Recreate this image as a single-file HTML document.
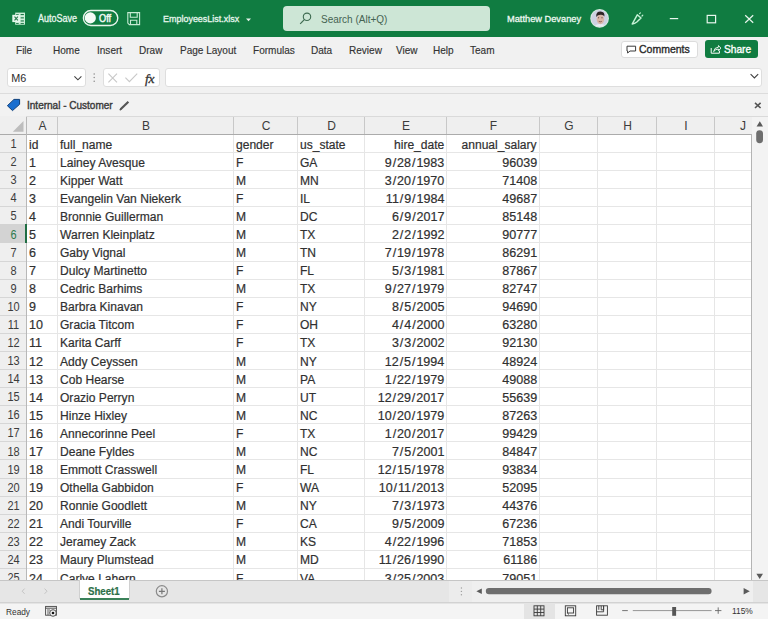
<!DOCTYPE html><html><head><meta charset="utf-8"><style>
*{box-sizing:border-box;margin:0;padding:0}
body{width:768px;height:619px;overflow:hidden;position:relative;background:#f3f3f3;font-family:"Liberation Sans",sans-serif;color:#262626}
.a{position:absolute}
.t{position:absolute;white-space:nowrap;line-height:1}
.cell{position:absolute;white-space:nowrap;font-size:12.3px;line-height:18px;color:#303030;-webkit-text-stroke:0.2px #303030;transform-origin:0 50%}
.cr{transform-origin:100% 50%}
.hl{position:absolute;height:1px}
.vl{position:absolute;width:1px}
svg{position:absolute;overflow:visible}
</style></head><body>

<div class="a" style="left:0;top:0;width:768px;height:37px;background:#107c41"></div>
<svg style="left:0;top:0" width="40" height="37">
<rect x="15.2" y="12.6" width="9.8" height="12.1" fill="#cdeed8"/>
<g fill="#1d7746"><rect x="20.6" y="14" width="3.3" height="1.1"/><rect x="20.6" y="17.3" width="3.3" height="1.1"/><rect x="20.6" y="20.4" width="3.3" height="1.1"/><rect x="20.6" y="23" width="3.3" height="0.9"/><rect x="16.1" y="14" width="2.6" height="1.1"/><rect x="16.1" y="23" width="2.6" height="0.9"/></g>
<rect x="12.3" y="14.8" width="7.8" height="7.3" fill="#e6f7ec"/>
<path d="M14.5 16.6 L17.9 20.4 M17.9 16.6 L14.5 20.4" stroke="#2a7a4d" stroke-width="1.1"/>
</svg>
<div class="t" style="left:37.6px;top:13.7px;font-size:10px;color:#e8f7ee;-webkit-text-stroke:0.3px #e8f7ee;transform:scaleX(0.9);transform-origin:0 0">AutoSave</div>
<svg style="left:0;top:0" width="160" height="37">
<rect x="83.4" y="10.5" width="34.4" height="15" rx="7.5" fill="none" stroke="#e8f5ec" stroke-width="1.4"/>
<circle cx="90.3" cy="17.9" r="5.6" fill="#f4fbf6"/>
</svg>
<div class="t" style="left:99.4px;top:14px;font-size:10px;color:#f2faf5;-webkit-text-stroke:0.45px #f2faf5;transform:scaleX(0.92);transform-origin:0 0">Off</div>
<svg style="left:0;top:0" width="160" height="37">
<g fill="none" stroke="#c6ead3" stroke-width="1.1">
<path d="M127.8 12.6 H139.6 V24.6 H129.3 L127.8 23.1 Z"/>
<path d="M130.3 12.6 V17.2 H137.2 V12.6"/>
<path d="M130.5 24.6 V20.3 H136.8 V24.6"/>
</g></svg>
<div class="t" style="left:163.2px;top:14.4px;font-size:9.7px;color:#e8f7ee;-webkit-text-stroke:0.3px #e8f7ee;transform:scaleX(0.925);transform-origin:0 0">EmployeesList.xlsx</div>
<svg style="left:0;top:0" width="260" height="37"><path d="M246 18.6 H251 L248.5 21.2 Z" fill="#e6f3eb"/></svg>
<div class="a" style="left:283px;top:6px;width:207px;height:25px;border-radius:4px;background:#cde6d6"></div>
<svg style="left:0;top:0" width="330" height="37">
<circle cx="307" cy="16.8" r="3.7" fill="none" stroke="#3e6b51" stroke-width="1.1"/>
<path d="M304.3 19.6 L300.2 23.8" stroke="#3e6b51" stroke-width="1.2"/>
</svg>
<div class="t" style="left:321px;top:14.6px;font-size:10px;color:#466352">Search (Alt+Q)</div>
<div class="t" style="left:507.2px;top:14.4px;font-size:9.7px;color:#eef8f1;-webkit-text-stroke:0.3px #eef8f1;transform:scaleX(0.955);transform-origin:0 0">Matthew Devaney</div>
<svg style="left:0;top:0" width="768" height="37">
<defs><clipPath id="av"><circle cx="599.6" cy="18.4" r="8.4"/></clipPath></defs>
<circle cx="599.6" cy="18.4" r="9.3" fill="#d9eee2"/>
<g clip-path="url(#av)">
<rect x="590" y="9" width="20" height="20" fill="#cdd1e2"/>
<path d="M593.5 29 Q594 24.2 600.2 24 Q606.4 24.2 607 29 Z" fill="#e9ebf2"/>
<ellipse cx="600.4" cy="19.2" rx="3.7" ry="5" fill="#d9b5a6"/>
<path d="M596.2 17 Q595.8 11.6 600.6 11.6 Q605 11.8 604.4 16.6 Q603.4 14.6 600.6 14.8 Q597.6 14.9 596.2 17 Z" fill="#2f2424"/>
<circle cx="598.6" cy="17.8" r="0.55" fill="#3a2a2a"/><circle cx="602" cy="17.8" r="0.55" fill="#3a2a2a"/>
<path d="M598.8 21.4 Q600.4 22.2 601.8 21.4" stroke="#7a4f43" stroke-width="0.8" fill="none"/>
</g></svg>
<svg style="left:0;top:0" width="768" height="37">
<g fill="none" stroke="#c6f2d6" stroke-width="1.5" stroke-linejoin="round" stroke-linecap="round">
<path d="M632.2 24 L637.3 14.8 L641 18 L636.8 22 Q634.6 23.6 632.2 24 Z"/>
<path d="M639.6 13.6 L640.4 12.8 M642 16 L642.8 15.2" stroke-width="1.2"/>
</g>
<path d="M669.8 18.6 H678.2" stroke="#e8f6ed" stroke-width="1.2"/>
<rect x="707.2" y="15.4" width="8.4" height="7.4" fill="none" stroke="#e8f6ed" stroke-width="1.2"/>
<path d="M745.2 15.2 L753.2 22.8 M753.2 15.2 L745.2 22.8" stroke="#e8f6ed" stroke-width="1.2"/>
</svg>
<div class="a" style="left:0;top:37px;width:768px;height:56px;background:#f1f1f1"></div>
<div class="t" style="left:16.299999999999997px;top:45px;font-size:10.5px;color:#333;-webkit-text-stroke:0.15px #333;transform:scaleX(0.955);transform-origin:0 0">File</div>
<div class="t" style="left:53.199999999999996px;top:45px;font-size:10.5px;color:#333;-webkit-text-stroke:0.15px #333;transform:scaleX(0.955);transform-origin:0 0">Home</div>
<div class="t" style="left:97.10000000000001px;top:45px;font-size:10.5px;color:#333;-webkit-text-stroke:0.15px #333;transform:scaleX(0.955);transform-origin:0 0">Insert</div>
<div class="t" style="left:139.3px;top:45px;font-size:10.5px;color:#333;-webkit-text-stroke:0.15px #333;transform:scaleX(0.955);transform-origin:0 0">Draw</div>
<div class="t" style="left:179.9px;top:45px;font-size:10.5px;color:#333;-webkit-text-stroke:0.15px #333;transform:scaleX(0.955);transform-origin:0 0">Page Layout</div>
<div class="t" style="left:253.20000000000002px;top:45px;font-size:10.5px;color:#333;-webkit-text-stroke:0.15px #333;transform:scaleX(0.955);transform-origin:0 0">Formulas</div>
<div class="t" style="left:311.29999999999995px;top:45px;font-size:10.5px;color:#333;-webkit-text-stroke:0.15px #333;transform:scaleX(0.955);transform-origin:0 0">Data</div>
<div class="t" style="left:349.0px;top:45px;font-size:10.5px;color:#333;-webkit-text-stroke:0.15px #333;transform:scaleX(0.955);transform-origin:0 0">Review</div>
<div class="t" style="left:396.09999999999997px;top:45px;font-size:10.5px;color:#333;-webkit-text-stroke:0.15px #333;transform:scaleX(0.955);transform-origin:0 0">View</div>
<div class="t" style="left:432.9px;top:45px;font-size:10.5px;color:#333;-webkit-text-stroke:0.15px #333;transform:scaleX(0.955);transform-origin:0 0">Help</div>
<div class="t" style="left:469.79999999999995px;top:45px;font-size:10.5px;color:#333;-webkit-text-stroke:0.15px #333;transform:scaleX(0.955);transform-origin:0 0">Team</div>
<div class="a" style="left:620.5px;top:40.5px;width:77.5px;height:17px;border-radius:3px;background:#fff;border:1px solid #dcdcdc"></div>
<svg style="left:0;top:0" width="768" height="70">
<path d="M627 46.2 H635.6 V51 H630 L627.6 53 V51 H627 Z" fill="none" stroke="#3a3a3a" stroke-width="1"/>
</svg>
<div class="t" style="left:639px;top:44.2px;font-size:10.5px;color:#2b2b2b;-webkit-text-stroke:0.35px #2b2b2b;transform:scaleX(1.0);transform-origin:0 0">Comments</div>
<div class="a" style="left:705px;top:40px;width:53px;height:18.2px;border-radius:3px;background:#107c41"></div>
<svg style="left:0;top:0" width="768" height="70">
<path d="M711.2 48 V53.2 H719.4 V50.6" fill="none" stroke="#fff" stroke-width="1"/>
<path d="M713.6 51.6 Q714.2 47.4 718.4 47.2 V45.6 L721 48.2 L718.4 50.6 V49 Q715.6 49 713.6 51.6 Z" fill="none" stroke="#fff" stroke-width="0.9" stroke-linejoin="round"/>
</svg>
<div class="t" style="left:723.5px;top:44.2px;font-size:10.5px;color:#fff;-webkit-text-stroke:0.35px #fff;transform:scaleX(0.97);transform-origin:0 0">Share</div>
<div class="a" style="left:7px;top:68px;width:79px;height:19px;border-radius:3px;background:#fff;border:1px solid #dedede"></div>
<div class="t" style="left:11.2px;top:73.3px;font-size:10.8px;color:#2b2b2b">M6</div>
<svg style="left:0;top:0" width="768" height="100">
<path d="M74.4 76.3 L77.9 79.8 L81.4 76.3" fill="none" stroke="#404040" stroke-width="1.1"/>
<circle cx="94.2" cy="74" r="0.75" fill="#8a8a8a"/><circle cx="94.2" cy="77.6" r="0.75" fill="#8a8a8a"/><circle cx="94.2" cy="81.2" r="0.75" fill="#8a8a8a"/>
</svg>
<div class="a" style="left:103px;top:68px;width:57px;height:19px;border-radius:3px;background:#fff;border:1px solid #dedede"></div>
<svg style="left:0;top:0" width="768" height="100">
<path d="M108.4 73.6 L117 82.4 M117 73.6 L108.4 82.4" stroke="#c8c8c8" stroke-width="1.1"/>
<path d="M125.4 77.6 L129.4 81.6 L137.2 73.6" fill="none" stroke="#c8c8c8" stroke-width="1.1"/>
</svg>
<div class="t" style="left:145px;top:71.5px;font-size:13.5px;font-family:'Liberation Serif',serif;font-style:italic;color:#333;-webkit-text-stroke:0.3px #333;letter-spacing:-0.3px">fx</div>
<div class="a" style="left:164.5px;top:68px;width:597px;height:19px;border-radius:3px;background:#fff;border:1px solid #dedede"></div>
<svg style="left:0;top:0" width="768" height="100">
<path d="M750.6 74.2 L754.4 78 L758.2 74.2" fill="none" stroke="#404040" stroke-width="1.1"/>
</svg>
<div class="a" style="left:0;top:93px;width:768px;height:1px;background:#dcdcdc"></div>
<div class="a" style="left:0;top:94px;width:768px;height:22px;background:#f2f2f2"></div>
<svg style="left:0;top:0" width="768" height="120">
<path d="M7.4 105.7 L14 99.4 H19.6 V104.3 L12.5 110.6 Z" fill="#1a6fd0" stroke="#0d3f7a" stroke-width="1" stroke-linejoin="round"/>
<path d="M120.6 109.2 L128.4 101.8" stroke="#555" stroke-width="2.2"/>
<path d="M119.8 110.2 L121.3 108.6" stroke="#555" stroke-width="1.4"/>
<path d="M755 102.8 L760.6 108 M760.6 102.8 L755 108" stroke="#555" stroke-width="1.6"/>
</svg>
<div class="t" style="left:26.8px;top:100.1px;font-size:10.6px;color:#3b3b3b;-webkit-text-stroke:0.4px #3b3b3b;transform:scaleX(0.945);transform-origin:0 0">Internal - Customer</div>
<div class="a" style="left:0;top:116px;width:768px;height:464px;background:#fff"></div>
<div class="a" style="left:0;top:116px;width:768px;height:18px;background:#efefef"></div>
<div class="hl" style="left:0;top:116px;width:768px;background:#dadada"></div>
<div class="a" style="left:0;top:116px;width:26px;height:464px;background:#efefef"></div>
<div class="a" style="left:752px;top:117px;width:16px;height:463px;background:#f3f3f3"></div>
<div class="hl" style="left:27px;top:152px;width:724px;background:#e6e6e6"></div>
<div class="hl" style="left:0;top:152px;width:26px;background:#d6d6d6"></div>
<div class="hl" style="left:27px;top:170px;width:724px;background:#e6e6e6"></div>
<div class="hl" style="left:0;top:170px;width:26px;background:#d6d6d6"></div>
<div class="hl" style="left:27px;top:188px;width:724px;background:#e6e6e6"></div>
<div class="hl" style="left:0;top:188px;width:26px;background:#d6d6d6"></div>
<div class="hl" style="left:27px;top:206px;width:724px;background:#e6e6e6"></div>
<div class="hl" style="left:0;top:206px;width:26px;background:#d6d6d6"></div>
<div class="hl" style="left:27px;top:224px;width:724px;background:#e6e6e6"></div>
<div class="hl" style="left:0;top:224px;width:26px;background:#d6d6d6"></div>
<div class="hl" style="left:27px;top:242px;width:724px;background:#e6e6e6"></div>
<div class="hl" style="left:0;top:242px;width:26px;background:#d6d6d6"></div>
<div class="hl" style="left:27px;top:261px;width:724px;background:#e6e6e6"></div>
<div class="hl" style="left:0;top:261px;width:26px;background:#d6d6d6"></div>
<div class="hl" style="left:27px;top:279px;width:724px;background:#e6e6e6"></div>
<div class="hl" style="left:0;top:279px;width:26px;background:#d6d6d6"></div>
<div class="hl" style="left:27px;top:297px;width:724px;background:#e6e6e6"></div>
<div class="hl" style="left:0;top:297px;width:26px;background:#d6d6d6"></div>
<div class="hl" style="left:27px;top:315px;width:724px;background:#e6e6e6"></div>
<div class="hl" style="left:0;top:315px;width:26px;background:#d6d6d6"></div>
<div class="hl" style="left:27px;top:333px;width:724px;background:#e6e6e6"></div>
<div class="hl" style="left:0;top:333px;width:26px;background:#d6d6d6"></div>
<div class="hl" style="left:27px;top:351px;width:724px;background:#e6e6e6"></div>
<div class="hl" style="left:0;top:351px;width:26px;background:#d6d6d6"></div>
<div class="hl" style="left:27px;top:369px;width:724px;background:#e6e6e6"></div>
<div class="hl" style="left:0;top:369px;width:26px;background:#d6d6d6"></div>
<div class="hl" style="left:27px;top:387px;width:724px;background:#e6e6e6"></div>
<div class="hl" style="left:0;top:387px;width:26px;background:#d6d6d6"></div>
<div class="hl" style="left:27px;top:405px;width:724px;background:#e6e6e6"></div>
<div class="hl" style="left:0;top:405px;width:26px;background:#d6d6d6"></div>
<div class="hl" style="left:27px;top:423px;width:724px;background:#e6e6e6"></div>
<div class="hl" style="left:0;top:423px;width:26px;background:#d6d6d6"></div>
<div class="hl" style="left:27px;top:441px;width:724px;background:#e6e6e6"></div>
<div class="hl" style="left:0;top:441px;width:26px;background:#d6d6d6"></div>
<div class="hl" style="left:27px;top:459px;width:724px;background:#e6e6e6"></div>
<div class="hl" style="left:0;top:459px;width:26px;background:#d6d6d6"></div>
<div class="hl" style="left:27px;top:478px;width:724px;background:#e6e6e6"></div>
<div class="hl" style="left:0;top:478px;width:26px;background:#d6d6d6"></div>
<div class="hl" style="left:27px;top:496px;width:724px;background:#e6e6e6"></div>
<div class="hl" style="left:0;top:496px;width:26px;background:#d6d6d6"></div>
<div class="hl" style="left:27px;top:514px;width:724px;background:#e6e6e6"></div>
<div class="hl" style="left:0;top:514px;width:26px;background:#d6d6d6"></div>
<div class="hl" style="left:27px;top:532px;width:724px;background:#e6e6e6"></div>
<div class="hl" style="left:0;top:532px;width:26px;background:#d6d6d6"></div>
<div class="hl" style="left:27px;top:550px;width:724px;background:#e6e6e6"></div>
<div class="hl" style="left:0;top:550px;width:26px;background:#d6d6d6"></div>
<div class="hl" style="left:27px;top:568px;width:724px;background:#e6e6e6"></div>
<div class="hl" style="left:0;top:568px;width:26px;background:#d6d6d6"></div>
<div class="vl" style="left:57px;top:134px;height:446px;background:#e6e6e6"></div>
<div class="vl" style="left:57px;top:117px;height:17px;background:#c8c8c8"></div>
<div class="vl" style="left:233px;top:134px;height:446px;background:#e6e6e6"></div>
<div class="vl" style="left:233px;top:117px;height:17px;background:#c8c8c8"></div>
<div class="vl" style="left:297px;top:134px;height:446px;background:#e6e6e6"></div>
<div class="vl" style="left:297px;top:117px;height:17px;background:#c8c8c8"></div>
<div class="vl" style="left:364px;top:134px;height:446px;background:#e6e6e6"></div>
<div class="vl" style="left:364px;top:117px;height:17px;background:#c8c8c8"></div>
<div class="vl" style="left:446px;top:134px;height:446px;background:#e6e6e6"></div>
<div class="vl" style="left:446px;top:117px;height:17px;background:#c8c8c8"></div>
<div class="vl" style="left:539px;top:134px;height:446px;background:#e6e6e6"></div>
<div class="vl" style="left:539px;top:117px;height:17px;background:#c8c8c8"></div>
<div class="vl" style="left:597px;top:134px;height:446px;background:#e6e6e6"></div>
<div class="vl" style="left:597px;top:117px;height:17px;background:#c8c8c8"></div>
<div class="vl" style="left:656px;top:134px;height:446px;background:#e6e6e6"></div>
<div class="vl" style="left:656px;top:117px;height:17px;background:#c8c8c8"></div>
<div class="vl" style="left:714px;top:134px;height:446px;background:#e6e6e6"></div>
<div class="vl" style="left:714px;top:117px;height:17px;background:#c8c8c8"></div>
<div class="hl" style="left:0;top:134px;width:752px;background:#ababab"></div>
<div class="vl" style="left:26px;top:117px;height:463px;background:#b8b8b8"></div>
<div class="vl" style="left:751px;top:134px;height:446px;background:#b4b4b4"></div>
<svg style="left:0;top:0" width="40" height="140"><polygon points="23.5,121 23.5,131.8 12.8,131.8" fill="#bdbdbd"/></svg>
<div class="a" style="left:0;top:224px;width:25px;height:19px;background:#d3d3d3"></div>
<div class="a" style="left:25px;top:224px;width:2px;height:19px;background:#1f6e43"></div>
<div class="t" style="left:22.5px;width:40px;text-align:center;top:119.7px;font-size:12px;color:#3c3c3c">A</div>
<div class="t" style="left:126.0px;width:40px;text-align:center;top:119.7px;font-size:12px;color:#3c3c3c">B</div>
<div class="t" style="left:246.0px;width:40px;text-align:center;top:119.7px;font-size:12px;color:#3c3c3c">C</div>
<div class="t" style="left:311.5px;width:40px;text-align:center;top:119.7px;font-size:12px;color:#3c3c3c">D</div>
<div class="t" style="left:386.0px;width:40px;text-align:center;top:119.7px;font-size:12px;color:#3c3c3c">E</div>
<div class="t" style="left:473.5px;width:40px;text-align:center;top:119.7px;font-size:12px;color:#3c3c3c">F</div>
<div class="t" style="left:549.0px;width:40px;text-align:center;top:119.7px;font-size:12px;color:#3c3c3c">G</div>
<div class="t" style="left:607.5px;width:40px;text-align:center;top:119.7px;font-size:12px;color:#3c3c3c">H</div>
<div class="t" style="left:666.0px;width:40px;text-align:center;top:119.7px;font-size:12px;color:#3c3c3c">I</div>
<div class="t" style="left:723px;width:40px;text-align:center;top:119.7px;font-size:12px;color:#3c3c3c">J</div>
<div class="t" style="left:0;width:27px;text-align:center;top:138.10px;font-size:12.5px;color:#3c3c3c;transform:scaleX(0.88)">1</div>
<div class="t" style="left:0;width:27px;text-align:center;top:156.18px;font-size:12.5px;color:#3c3c3c;transform:scaleX(0.88)">2</div>
<div class="t" style="left:0;width:27px;text-align:center;top:174.27px;font-size:12.5px;color:#3c3c3c;transform:scaleX(0.88)">3</div>
<div class="t" style="left:0;width:27px;text-align:center;top:192.35px;font-size:12.5px;color:#3c3c3c;transform:scaleX(0.88)">4</div>
<div class="t" style="left:0;width:27px;text-align:center;top:210.43px;font-size:12.5px;color:#3c3c3c;transform:scaleX(0.88)">5</div>
<div class="t" style="left:0;width:27px;text-align:center;top:228.51px;font-size:12.5px;color:#2d7a4e;transform:scaleX(0.88)">6</div>
<div class="t" style="left:0;width:27px;text-align:center;top:246.60px;font-size:12.5px;color:#3c3c3c;transform:scaleX(0.88)">7</div>
<div class="t" style="left:0;width:27px;text-align:center;top:264.68px;font-size:12.5px;color:#3c3c3c;transform:scaleX(0.88)">8</div>
<div class="t" style="left:0;width:27px;text-align:center;top:282.76px;font-size:12.5px;color:#3c3c3c;transform:scaleX(0.88)">9</div>
<div class="t" style="left:0;width:27px;text-align:center;top:300.85px;font-size:12.5px;color:#3c3c3c;transform:scaleX(0.88)">10</div>
<div class="t" style="left:0;width:27px;text-align:center;top:318.93px;font-size:12.5px;color:#3c3c3c;transform:scaleX(0.88)">11</div>
<div class="t" style="left:0;width:27px;text-align:center;top:337.01px;font-size:12.5px;color:#3c3c3c;transform:scaleX(0.88)">12</div>
<div class="t" style="left:0;width:27px;text-align:center;top:355.10px;font-size:12.5px;color:#3c3c3c;transform:scaleX(0.88)">13</div>
<div class="t" style="left:0;width:27px;text-align:center;top:373.18px;font-size:12.5px;color:#3c3c3c;transform:scaleX(0.88)">14</div>
<div class="t" style="left:0;width:27px;text-align:center;top:391.26px;font-size:12.5px;color:#3c3c3c;transform:scaleX(0.88)">15</div>
<div class="t" style="left:0;width:27px;text-align:center;top:409.35px;font-size:12.5px;color:#3c3c3c;transform:scaleX(0.88)">16</div>
<div class="t" style="left:0;width:27px;text-align:center;top:427.43px;font-size:12.5px;color:#3c3c3c;transform:scaleX(0.88)">17</div>
<div class="t" style="left:0;width:27px;text-align:center;top:445.51px;font-size:12.5px;color:#3c3c3c;transform:scaleX(0.88)">18</div>
<div class="t" style="left:0;width:27px;text-align:center;top:463.59px;font-size:12.5px;color:#3c3c3c;transform:scaleX(0.88)">19</div>
<div class="t" style="left:0;width:27px;text-align:center;top:481.68px;font-size:12.5px;color:#3c3c3c;transform:scaleX(0.88)">20</div>
<div class="t" style="left:0;width:27px;text-align:center;top:499.76px;font-size:12.5px;color:#3c3c3c;transform:scaleX(0.88)">21</div>
<div class="t" style="left:0;width:27px;text-align:center;top:517.84px;font-size:12.5px;color:#3c3c3c;transform:scaleX(0.88)">22</div>
<div class="t" style="left:0;width:27px;text-align:center;top:535.93px;font-size:12.5px;color:#3c3c3c;transform:scaleX(0.88)">23</div>
<div class="t" style="left:0;width:27px;text-align:center;top:554.01px;font-size:12.5px;color:#3c3c3c;transform:scaleX(0.88)">24</div>
<div class="t" style="left:0;width:27px;text-align:center;top:572.09px;font-size:12.5px;color:#3c3c3c;transform:scaleX(0.88)">25</div>
<div class="cell" style="left:29.3px;top:135.54px;transform:scaleX(0.98)">id</div>
<div class="cell" style="left:60.3px;top:135.54px;transform:scaleX(0.98)">full_name</div>
<div class="cell" style="left:236.3px;top:135.54px;transform:scaleX(0.98)">gender</div>
<div class="cell" style="left:300.3px;top:135.54px;transform:scaleX(0.98)">us_state</div>
<div class="cell cr" style="right:324px;top:135.54px;transform:scaleX(0.98)">hire_date</div>
<div class="cell cr" style="right:231px;top:135.54px;transform:scaleX(0.98)">annual_salary</div>
<div class="cell" style="left:29.3px;top:153.62px;transform:scaleX(1.02)">1</div>
<div class="cell" style="left:60.3px;top:153.62px;transform:scaleX(0.98)">Lainey Avesque</div>
<div class="cell" style="left:236.3px;top:153.62px;transform:scaleX(0.98)">F</div>
<div class="cell" style="left:300.3px;top:153.62px;transform:scaleX(0.98)">GA</div>
<div class="cell cr" style="right:324px;top:153.62px;transform:scaleX(1.02)">9<span style="margin:0 0.9px">/</span>28<span style="margin:0 0.9px">/</span>1983</div>
<div class="cell cr" style="right:231px;top:153.62px;transform:scaleX(1.02)">96039</div>
<div class="cell" style="left:29.3px;top:171.70px;transform:scaleX(1.02)">2</div>
<div class="cell" style="left:60.3px;top:171.70px;transform:scaleX(0.98)">Kipper Watt</div>
<div class="cell" style="left:236.3px;top:171.70px;transform:scaleX(0.98)">M</div>
<div class="cell" style="left:300.3px;top:171.70px;transform:scaleX(0.98)">MN</div>
<div class="cell cr" style="right:324px;top:171.70px;transform:scaleX(1.02)">3<span style="margin:0 0.9px">/</span>20<span style="margin:0 0.9px">/</span>1970</div>
<div class="cell cr" style="right:231px;top:171.70px;transform:scaleX(1.02)">71408</div>
<div class="cell" style="left:29.3px;top:189.79px;transform:scaleX(1.02)">3</div>
<div class="cell" style="left:60.3px;top:189.79px;transform:scaleX(0.98)">Evangelin Van Niekerk</div>
<div class="cell" style="left:236.3px;top:189.79px;transform:scaleX(0.98)">F</div>
<div class="cell" style="left:300.3px;top:189.79px;transform:scaleX(0.98)">IL</div>
<div class="cell cr" style="right:324px;top:189.79px;transform:scaleX(1.02)">11<span style="margin:0 0.9px">/</span>9<span style="margin:0 0.9px">/</span>1984</div>
<div class="cell cr" style="right:231px;top:189.79px;transform:scaleX(1.02)">49687</div>
<div class="cell" style="left:29.3px;top:207.87px;transform:scaleX(1.02)">4</div>
<div class="cell" style="left:60.3px;top:207.87px;transform:scaleX(0.98)">Bronnie Guillerman</div>
<div class="cell" style="left:236.3px;top:207.87px;transform:scaleX(0.98)">M</div>
<div class="cell" style="left:300.3px;top:207.87px;transform:scaleX(0.98)">DC</div>
<div class="cell cr" style="right:324px;top:207.87px;transform:scaleX(1.02)">6<span style="margin:0 0.9px">/</span>9<span style="margin:0 0.9px">/</span>2017</div>
<div class="cell cr" style="right:231px;top:207.87px;transform:scaleX(1.02)">85148</div>
<div class="cell" style="left:29.3px;top:225.95px;transform:scaleX(1.02)">5</div>
<div class="cell" style="left:60.3px;top:225.95px;transform:scaleX(0.98)">Warren Kleinplatz</div>
<div class="cell" style="left:236.3px;top:225.95px;transform:scaleX(0.98)">M</div>
<div class="cell" style="left:300.3px;top:225.95px;transform:scaleX(0.98)">TX</div>
<div class="cell cr" style="right:324px;top:225.95px;transform:scaleX(1.02)">2<span style="margin:0 0.9px">/</span>2<span style="margin:0 0.9px">/</span>1992</div>
<div class="cell cr" style="right:231px;top:225.95px;transform:scaleX(1.02)">90777</div>
<div class="cell" style="left:29.3px;top:244.04px;transform:scaleX(1.02)">6</div>
<div class="cell" style="left:60.3px;top:244.04px;transform:scaleX(0.98)">Gaby Vignal</div>
<div class="cell" style="left:236.3px;top:244.04px;transform:scaleX(0.98)">M</div>
<div class="cell" style="left:300.3px;top:244.04px;transform:scaleX(0.98)">TN</div>
<div class="cell cr" style="right:324px;top:244.04px;transform:scaleX(1.02)">7<span style="margin:0 0.9px">/</span>19<span style="margin:0 0.9px">/</span>1978</div>
<div class="cell cr" style="right:231px;top:244.04px;transform:scaleX(1.02)">86291</div>
<div class="cell" style="left:29.3px;top:262.12px;transform:scaleX(1.02)">7</div>
<div class="cell" style="left:60.3px;top:262.12px;transform:scaleX(0.98)">Dulcy Martinetto</div>
<div class="cell" style="left:236.3px;top:262.12px;transform:scaleX(0.98)">F</div>
<div class="cell" style="left:300.3px;top:262.12px;transform:scaleX(0.98)">FL</div>
<div class="cell cr" style="right:324px;top:262.12px;transform:scaleX(1.02)">5<span style="margin:0 0.9px">/</span>3<span style="margin:0 0.9px">/</span>1981</div>
<div class="cell cr" style="right:231px;top:262.12px;transform:scaleX(1.02)">87867</div>
<div class="cell" style="left:29.3px;top:280.20px;transform:scaleX(1.02)">8</div>
<div class="cell" style="left:60.3px;top:280.20px;transform:scaleX(0.98)">Cedric Barhims</div>
<div class="cell" style="left:236.3px;top:280.20px;transform:scaleX(0.98)">M</div>
<div class="cell" style="left:300.3px;top:280.20px;transform:scaleX(0.98)">TX</div>
<div class="cell cr" style="right:324px;top:280.20px;transform:scaleX(1.02)">9<span style="margin:0 0.9px">/</span>27<span style="margin:0 0.9px">/</span>1979</div>
<div class="cell cr" style="right:231px;top:280.20px;transform:scaleX(1.02)">82747</div>
<div class="cell" style="left:29.3px;top:298.29px;transform:scaleX(1.02)">9</div>
<div class="cell" style="left:60.3px;top:298.29px;transform:scaleX(0.98)">Barbra Kinavan</div>
<div class="cell" style="left:236.3px;top:298.29px;transform:scaleX(0.98)">F</div>
<div class="cell" style="left:300.3px;top:298.29px;transform:scaleX(0.98)">NY</div>
<div class="cell cr" style="right:324px;top:298.29px;transform:scaleX(1.02)">8<span style="margin:0 0.9px">/</span>5<span style="margin:0 0.9px">/</span>2005</div>
<div class="cell cr" style="right:231px;top:298.29px;transform:scaleX(1.02)">94690</div>
<div class="cell" style="left:29.3px;top:316.37px;transform:scaleX(1.02)">10</div>
<div class="cell" style="left:60.3px;top:316.37px;transform:scaleX(0.98)">Gracia Titcom</div>
<div class="cell" style="left:236.3px;top:316.37px;transform:scaleX(0.98)">F</div>
<div class="cell" style="left:300.3px;top:316.37px;transform:scaleX(0.98)">OH</div>
<div class="cell cr" style="right:324px;top:316.37px;transform:scaleX(1.02)">4<span style="margin:0 0.9px">/</span>4<span style="margin:0 0.9px">/</span>2000</div>
<div class="cell cr" style="right:231px;top:316.37px;transform:scaleX(1.02)">63280</div>
<div class="cell" style="left:29.3px;top:334.45px;transform:scaleX(1.02)">11</div>
<div class="cell" style="left:60.3px;top:334.45px;transform:scaleX(0.98)">Karita Carff</div>
<div class="cell" style="left:236.3px;top:334.45px;transform:scaleX(0.98)">F</div>
<div class="cell" style="left:300.3px;top:334.45px;transform:scaleX(0.98)">TX</div>
<div class="cell cr" style="right:324px;top:334.45px;transform:scaleX(1.02)">3<span style="margin:0 0.9px">/</span>3<span style="margin:0 0.9px">/</span>2002</div>
<div class="cell cr" style="right:231px;top:334.45px;transform:scaleX(1.02)">92130</div>
<div class="cell" style="left:29.3px;top:352.53px;transform:scaleX(1.02)">12</div>
<div class="cell" style="left:60.3px;top:352.53px;transform:scaleX(0.98)">Addy Ceyssen</div>
<div class="cell" style="left:236.3px;top:352.53px;transform:scaleX(0.98)">M</div>
<div class="cell" style="left:300.3px;top:352.53px;transform:scaleX(0.98)">NY</div>
<div class="cell cr" style="right:324px;top:352.53px;transform:scaleX(1.02)">12<span style="margin:0 0.9px">/</span>5<span style="margin:0 0.9px">/</span>1994</div>
<div class="cell cr" style="right:231px;top:352.53px;transform:scaleX(1.02)">48924</div>
<div class="cell" style="left:29.3px;top:370.62px;transform:scaleX(1.02)">13</div>
<div class="cell" style="left:60.3px;top:370.62px;transform:scaleX(0.98)">Cob Hearse</div>
<div class="cell" style="left:236.3px;top:370.62px;transform:scaleX(0.98)">M</div>
<div class="cell" style="left:300.3px;top:370.62px;transform:scaleX(0.98)">PA</div>
<div class="cell cr" style="right:324px;top:370.62px;transform:scaleX(1.02)">1<span style="margin:0 0.9px">/</span>22<span style="margin:0 0.9px">/</span>1979</div>
<div class="cell cr" style="right:231px;top:370.62px;transform:scaleX(1.02)">49088</div>
<div class="cell" style="left:29.3px;top:388.70px;transform:scaleX(1.02)">14</div>
<div class="cell" style="left:60.3px;top:388.70px;transform:scaleX(0.98)">Orazio Perryn</div>
<div class="cell" style="left:236.3px;top:388.70px;transform:scaleX(0.98)">M</div>
<div class="cell" style="left:300.3px;top:388.70px;transform:scaleX(0.98)">UT</div>
<div class="cell cr" style="right:324px;top:388.70px;transform:scaleX(1.02)">12<span style="margin:0 0.9px">/</span>29<span style="margin:0 0.9px">/</span>2017</div>
<div class="cell cr" style="right:231px;top:388.70px;transform:scaleX(1.02)">55639</div>
<div class="cell" style="left:29.3px;top:406.78px;transform:scaleX(1.02)">15</div>
<div class="cell" style="left:60.3px;top:406.78px;transform:scaleX(0.98)">Hinze Hixley</div>
<div class="cell" style="left:236.3px;top:406.78px;transform:scaleX(0.98)">M</div>
<div class="cell" style="left:300.3px;top:406.78px;transform:scaleX(0.98)">NC</div>
<div class="cell cr" style="right:324px;top:406.78px;transform:scaleX(1.02)">10<span style="margin:0 0.9px">/</span>20<span style="margin:0 0.9px">/</span>1979</div>
<div class="cell cr" style="right:231px;top:406.78px;transform:scaleX(1.02)">87263</div>
<div class="cell" style="left:29.3px;top:424.87px;transform:scaleX(1.02)">16</div>
<div class="cell" style="left:60.3px;top:424.87px;transform:scaleX(0.98)">Annecorinne Peel</div>
<div class="cell" style="left:236.3px;top:424.87px;transform:scaleX(0.98)">F</div>
<div class="cell" style="left:300.3px;top:424.87px;transform:scaleX(0.98)">TX</div>
<div class="cell cr" style="right:324px;top:424.87px;transform:scaleX(1.02)">1<span style="margin:0 0.9px">/</span>20<span style="margin:0 0.9px">/</span>2017</div>
<div class="cell cr" style="right:231px;top:424.87px;transform:scaleX(1.02)">99429</div>
<div class="cell" style="left:29.3px;top:442.95px;transform:scaleX(1.02)">17</div>
<div class="cell" style="left:60.3px;top:442.95px;transform:scaleX(0.98)">Deane Fyldes</div>
<div class="cell" style="left:236.3px;top:442.95px;transform:scaleX(0.98)">M</div>
<div class="cell" style="left:300.3px;top:442.95px;transform:scaleX(0.98)">NC</div>
<div class="cell cr" style="right:324px;top:442.95px;transform:scaleX(1.02)">7<span style="margin:0 0.9px">/</span>5<span style="margin:0 0.9px">/</span>2001</div>
<div class="cell cr" style="right:231px;top:442.95px;transform:scaleX(1.02)">84847</div>
<div class="cell" style="left:29.3px;top:461.03px;transform:scaleX(1.02)">18</div>
<div class="cell" style="left:60.3px;top:461.03px;transform:scaleX(0.98)">Emmott Crasswell</div>
<div class="cell" style="left:236.3px;top:461.03px;transform:scaleX(0.98)">M</div>
<div class="cell" style="left:300.3px;top:461.03px;transform:scaleX(0.98)">FL</div>
<div class="cell cr" style="right:324px;top:461.03px;transform:scaleX(1.02)">12<span style="margin:0 0.9px">/</span>15<span style="margin:0 0.9px">/</span>1978</div>
<div class="cell cr" style="right:231px;top:461.03px;transform:scaleX(1.02)">93834</div>
<div class="cell" style="left:29.3px;top:479.12px;transform:scaleX(1.02)">19</div>
<div class="cell" style="left:60.3px;top:479.12px;transform:scaleX(0.98)">Othella Gabbidon</div>
<div class="cell" style="left:236.3px;top:479.12px;transform:scaleX(0.98)">F</div>
<div class="cell" style="left:300.3px;top:479.12px;transform:scaleX(0.98)">WA</div>
<div class="cell cr" style="right:324px;top:479.12px;transform:scaleX(1.02)">10<span style="margin:0 0.9px">/</span>11<span style="margin:0 0.9px">/</span>2013</div>
<div class="cell cr" style="right:231px;top:479.12px;transform:scaleX(1.02)">52095</div>
<div class="cell" style="left:29.3px;top:497.20px;transform:scaleX(1.02)">20</div>
<div class="cell" style="left:60.3px;top:497.20px;transform:scaleX(0.98)">Ronnie Goodlett</div>
<div class="cell" style="left:236.3px;top:497.20px;transform:scaleX(0.98)">M</div>
<div class="cell" style="left:300.3px;top:497.20px;transform:scaleX(0.98)">NY</div>
<div class="cell cr" style="right:324px;top:497.20px;transform:scaleX(1.02)">7<span style="margin:0 0.9px">/</span>3<span style="margin:0 0.9px">/</span>1973</div>
<div class="cell cr" style="right:231px;top:497.20px;transform:scaleX(1.02)">44376</div>
<div class="cell" style="left:29.3px;top:515.28px;transform:scaleX(1.02)">21</div>
<div class="cell" style="left:60.3px;top:515.28px;transform:scaleX(0.98)">Andi Tourville</div>
<div class="cell" style="left:236.3px;top:515.28px;transform:scaleX(0.98)">F</div>
<div class="cell" style="left:300.3px;top:515.28px;transform:scaleX(0.98)">CA</div>
<div class="cell cr" style="right:324px;top:515.28px;transform:scaleX(1.02)">9<span style="margin:0 0.9px">/</span>5<span style="margin:0 0.9px">/</span>2009</div>
<div class="cell cr" style="right:231px;top:515.28px;transform:scaleX(1.02)">67236</div>
<div class="cell" style="left:29.3px;top:533.36px;transform:scaleX(1.02)">22</div>
<div class="cell" style="left:60.3px;top:533.36px;transform:scaleX(0.98)">Jeramey Zack</div>
<div class="cell" style="left:236.3px;top:533.36px;transform:scaleX(0.98)">M</div>
<div class="cell" style="left:300.3px;top:533.36px;transform:scaleX(0.98)">KS</div>
<div class="cell cr" style="right:324px;top:533.36px;transform:scaleX(1.02)">4<span style="margin:0 0.9px">/</span>22<span style="margin:0 0.9px">/</span>1996</div>
<div class="cell cr" style="right:231px;top:533.36px;transform:scaleX(1.02)">71853</div>
<div class="cell" style="left:29.3px;top:551.45px;transform:scaleX(1.02)">23</div>
<div class="cell" style="left:60.3px;top:551.45px;transform:scaleX(0.98)">Maury Plumstead</div>
<div class="cell" style="left:236.3px;top:551.45px;transform:scaleX(0.98)">M</div>
<div class="cell" style="left:300.3px;top:551.45px;transform:scaleX(0.98)">MD</div>
<div class="cell cr" style="right:324px;top:551.45px;transform:scaleX(1.02)">11<span style="margin:0 0.9px">/</span>26<span style="margin:0 0.9px">/</span>1990</div>
<div class="cell cr" style="right:231px;top:551.45px;transform:scaleX(1.02)">61186</div>
<div class="cell" style="left:29.3px;top:569.53px;transform:scaleX(1.02)">24</div>
<div class="cell" style="left:60.3px;top:569.53px;transform:scaleX(0.98)">Carlye Lahern</div>
<div class="cell" style="left:236.3px;top:569.53px;transform:scaleX(0.98)">F</div>
<div class="cell" style="left:300.3px;top:569.53px;transform:scaleX(0.98)">VA</div>
<div class="cell cr" style="right:324px;top:569.53px;transform:scaleX(1.02)">3<span style="margin:0 0.9px">/</span>25<span style="margin:0 0.9px">/</span>2003</div>
<div class="cell cr" style="right:231px;top:569.53px;transform:scaleX(1.02)">79051</div>
<div class="a" style="left:0;top:580px;width:768px;height:22px;background:#e6e6e6"></div>
<div class="hl" style="left:0;top:580px;width:768px;background:#c6c6c6"></div>
<svg style="left:0;top:0" width="768" height="619">
<path d="M24.6 588.6 L22.2 591.2 L24.6 593.8" fill="none" stroke="#c4c4c4" stroke-width="1"/>
<path d="M44.6 588.6 L47 591.2 L44.6 593.8" fill="none" stroke="#c4c4c4" stroke-width="1"/>
</svg>
<div class="a" style="left:79px;top:580px;width:50.5px;height:19px;background:#fff;border-left:1px solid #d0d0d0;border-right:1px solid #d0d0d0"></div>
<div class="a" style="left:80px;top:598px;width:48.5px;height:2px;background:#3a8159"></div>
<div class="t" style="left:88.3px;top:586.4px;font-size:10.5px;font-weight:700;color:#2c7049;-webkit-text-stroke:0.2px #2c7049;transform:scaleX(0.92);transform-origin:0 0">Sheet1</div>
<svg style="left:0;top:0" width="768" height="619">
<circle cx="161.9" cy="591.3" r="5.6" fill="none" stroke="#8a8a8a" stroke-width="1.2"/>
<path d="M158.9 591.3 H164.9 M161.9 588.3 V594.3" stroke="#777" stroke-width="1.2"/>
</svg>
<div class="a" style="left:449px;top:581px;width:23px;height:21px;background:#ececec"></div>
<div class="a" style="left:472px;top:581px;width:281px;height:21px;background:#efefef"></div>
<svg style="left:0;top:0" width="768" height="619">
<circle cx="461.4" cy="588" r="0.7" fill="#a0a0a0"/><circle cx="461.4" cy="591.4" r="0.7" fill="#a0a0a0"/><circle cx="461.4" cy="594.7" r="0.7" fill="#a0a0a0"/>
<path d="M481.8 588.4 V594 L476.4 591.2 Z" fill="#5a5a5a"/>
<path d="M743.6 588 V594.6 L749.8 591.3 Z" fill="#5a5a5a"/>
<rect x="485.8" y="587.9" width="225.8" height="6.4" rx="3.2" fill="#6e6e6e"/>
<path d="M756.6 126.4 L759.8 121.2 L763 126.4 Z" fill="#5a5a5a"/>
<rect x="756.2" y="130.2" width="6.8" height="13" rx="3.4" fill="#6e6e6e"/>
<path d="M756.4 573.8 L763 573.8 L759.7 579 Z" fill="#5a5a5a"/>
</svg>
<div class="a" style="left:0;top:602px;width:768px;height:17px;background:#f4f4f4"></div>
<div class="hl" style="left:0;top:602px;width:768px;background:#d2d2d2"></div>
<div class="hl" style="left:0;top:603px;width:768px;background:#e4e4e4"></div>
<div class="t" style="left:5.5px;top:607.2px;font-size:9.5px;color:#333;transform:scaleX(0.875);transform-origin:0 0">Ready</div>
<svg style="left:0;top:0" width="768" height="619">
<rect x="45.6" y="606.4" width="10.8" height="8.8" fill="none" stroke="#444" stroke-width="0.9"/>
<path d="M45.6 608.2 H56.4" stroke="#444" stroke-width="0.9"/>
<path d="M47 610 H50 M47 612 H49.6 M47 614 H49" stroke="#444" stroke-width="0.8"/>
<circle cx="53" cy="613" r="3.3" fill="#f3f3f3" stroke="#444" stroke-width="0.9"/>
<circle cx="53" cy="613" r="1.3" fill="#111"/>
</svg>
<div class="a" style="left:524px;top:603px;width:31px;height:16px;background:#e4e4e4"></div>
<svg style="left:0;top:0" width="768" height="619">
<g fill="none" stroke="#3a3a3a" stroke-width="0.9">
<rect x="534" y="605.8" width="10" height="10"/>
<path d="M537.3 605.8 V615.8 M540.7 605.8 V615.8 M534 609.1 H544 M534 612.5 H544"/>
<rect x="565.3" y="605.8" width="10.4" height="10"/>
<rect x="567.4" y="607.8" width="6.2" height="5.2"/>
<path d="M567.4 613 L569 614.5"/>
<rect x="596.6" y="605.8" width="10.8" height="9.4"/>
<path d="M598.8 605.8 V609.8 M601.2 605.8 V609.8 H603.6 V605.8 M596.6 611.8 H603.6 V605.8"/>
</g>
<path d="M622.2 610.6 H627.8 M715 610.6 H721.4 M718.2 607.4 V613.8" stroke="#666" stroke-width="0.9"/><path d="M632.8 610.6 H711.6" stroke="#8a8a8a" stroke-width="0.9"/>
<rect x="672.2" y="607" width="3.9" height="8.8" fill="#555"/>
</svg>
<div class="t" style="left:731.5px;top:606.5px;font-size:9.3px;color:#333;transform:scaleX(0.9);transform-origin:0 0">115%</div>
</body></html>
